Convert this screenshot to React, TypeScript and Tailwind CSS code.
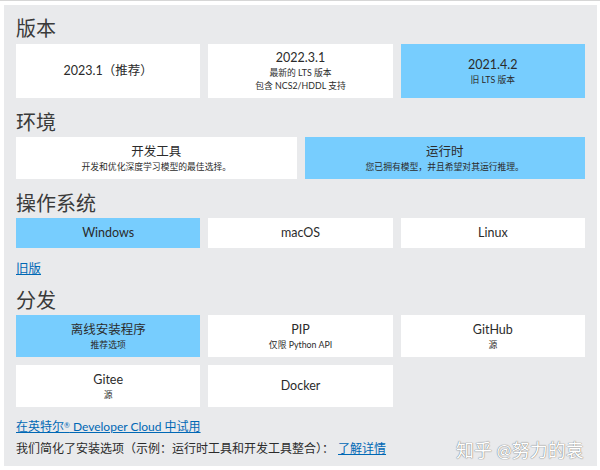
import React from "react";

type Tile = { title: string; subs?: string[]; active?: boolean };

const VERSIONS: Tile[] = [
  { title: "2023.1（推荐）" },
  { title: "2022.3.1", subs: ["最新的 LTS 版本", "包含 NCS2/HDDL 支持"] },
  { title: "2021.4.2", subs: ["旧 LTS 版本"], active: true },
];

const ENVS: Tile[] = [
  { title: "开发工具", subs: ["开发和优化深度学习模型的最佳选择。"] },
  { title: "运行时", subs: ["您已拥有模型，并且希望对其运行推理。"], active: true },
];

const SYSTEMS: Tile[] = [
  { title: "Windows", active: true },
  { title: "macOS" },
  { title: "Linux" },
];

const DISTS: Tile[] = [
  { title: "离线安装程序", subs: ["推荐选项"], active: true },
  { title: "PIP", subs: ["仅限 Python API"] },
  { title: "GitHub", subs: ["源"] },
  { title: "Gitee", subs: ["源"] },
  { title: "Docker" },
];

function Option({ tile, height }: { tile: Tile; height: string }) {
  return (
    <div
      className={`${height} flex flex-col items-center justify-center text-center text-[#2b2b2b] ${
        tile.active ? "bg-[#77cdfe]" : "bg-white"
      }`}
    >
      <div className="text-[12.5px] leading-[16px]">{tile.title}</div>
      {tile.subs?.map((s) => (
        <div key={s} className="text-[8.8px] leading-[12px] mt-[1px]">
          {s}
        </div>
      ))}
    </div>
  );
}

function Heading({ children }: { children: React.ReactNode }) {
  return <h2 className="text-[20px] leading-[28px] text-[#3a3a3a] font-normal">{children}</h2>;
}

export default function App() {
  return (
    <div
      className="relative w-[600px] h-[470px] bg-white border-t border-[#d6d6d6] overflow-hidden"
      style={{ fontFamily: '"Lato", "Noto Sans CJK SC", sans-serif' }}
    >
      <div className="ml-[4px] mt-[4px] w-[593px] h-[461px] bg-[#e9eaec] px-[12px] pt-[9px]">
        <Heading>版本</Heading>
        <div className="mt-[2px] grid grid-cols-3 gap-x-[8px]">
          {VERSIONS.map((t) => (
            <Option key={t.title} tile={t} height="h-[54px]" />
          ))}
        </div>

        <div className="mt-[10px]">
          <Heading>环境</Heading>
        </div>
        <div className="mt-[1px] grid grid-cols-2 gap-x-[8px]">
          {ENVS.map((t) => (
            <Option key={t.title} tile={t} height="h-[42px]" />
          ))}
        </div>

        <div className="mt-[10px]">
          <Heading>操作系统</Heading>
        </div>
        <div className="mt-[1px] grid grid-cols-3 gap-x-[8px]">
          {SYSTEMS.map((t) => (
            <Option key={t.title} tile={t} height="h-[30px]" />
          ))}
        </div>

        <a href="#" className="mt-[13px] block w-fit text-[12.5px] leading-[16px] text-[#0068b5] underline">
          旧版
        </a>

        <div className="mt-[9px]">
          <Heading>分发</Heading>
        </div>
        <div className="mt-[1px] grid grid-cols-3 gap-x-[8px] gap-y-[8px]">
          {DISTS.map((t) => (
            <Option key={t.title} tile={t} height="h-[42px]" />
          ))}
        </div>

        <a href="#" className="mt-[12px] block w-fit text-[12px] leading-[16px] text-[#0068b5] underline">
          在英特尔<sup className="text-[7px]">®</sup> Developer Cloud 中试用
        </a>
        <p className="mt-[6px] text-[12px] leading-[16px] text-[#2b2b2b]">
          我们简化了安装选项（示例：运行时工具和开发工具整合）：
          <a href="#" className="ml-[4px] text-[#0068b5] underline">
            了解详情
          </a>
        </p>
      </div>

      <div className="absolute left-[456px] top-[437px] text-[18px] leading-[24px] text-white [text-shadow:0_0_1px_#7a7a7a,0_0_1px_#7a7a7a]">
        知乎 @努力的袁
      </div>
    </div>
  );
}
